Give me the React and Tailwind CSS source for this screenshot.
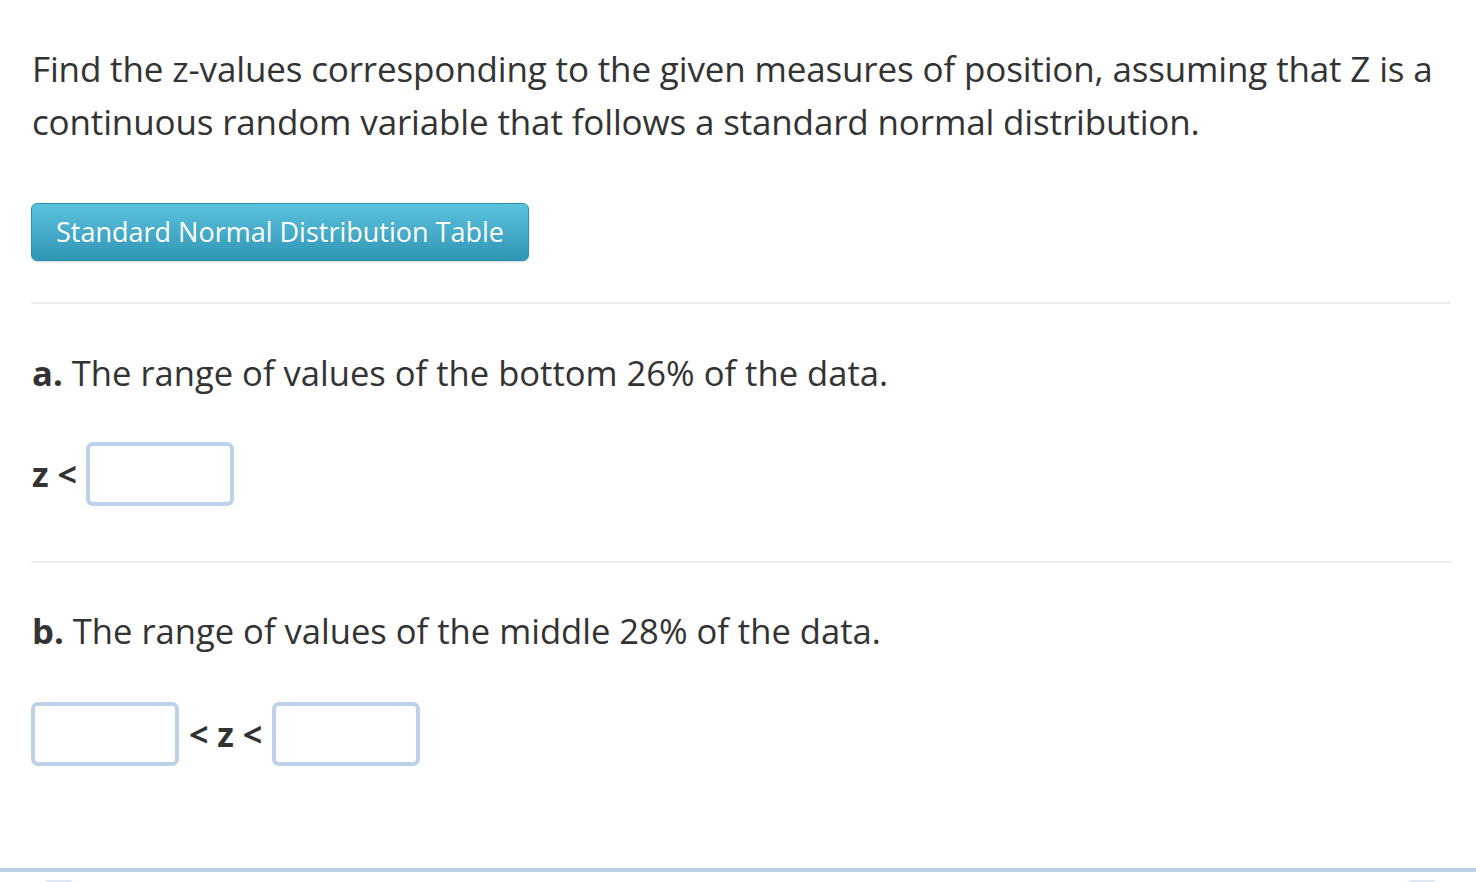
import React from 'react';

const font = { fontFamily: '"Open Sans", "Noto Sans", sans-serif' };

const Box = () => (
  <div className="w-[148px] h-[64px] rounded-[7px] border-[4px] border-[#bdd1ea] bg-white" />
);

const Divider = () => <div className="h-[2px] bg-[#eeeeee] mr-[25px] ml-[31px]" />;

export default function App() {
  return (
    <div className="bg-white text-[#333333] min-h-[882px] overflow-hidden" style={font}>
      <div className="px-[32px] pt-[42px]">
        <p className="text-[35px] leading-[53px] tracking-[-0.15px]">
          Find the z-values corresponding to the given measures of position, assuming that Z is a
          continuous random variable that follows a standard normal distribution.
        </p>
        <button className="mt-[55px] -ml-[1px] h-[58px] w-[498px] rounded-[6px] border border-[#2a8fae] bg-gradient-to-b from-[#5bc2de] to-[#2f96b4] text-white text-[27px] shadow-[0_1px_1px_rgba(0,0,0,0.15)]">
          Standard Normal Distribution Table
        </button>
      </div>

      <div className="mt-[41px]">
        <Divider />
      </div>

      <div className="px-[32px]">
        <h3 className="mt-[42px] text-[34.6px] leading-[53px]">
          <span className="font-bold">a.</span> The range of values of the bottom 26% of the data.
        </h3>
        <div className="mt-[43px] flex items-center">
          <span className="font-bold text-[34px] mr-[9px]">z &lt;</span>
          <Box />
        </div>
      </div>

      <div className="mt-[55px]">
        <Divider />
      </div>

      <div className="px-[32px]">
        <h3 className="mt-[41px] text-[34.6px] leading-[53px]">
          <span className="font-bold">b.</span> The range of values of the middle 28% of the data.
        </h3>
        <div className="mt-[45px] -ml-[1px] flex items-center">
          <Box />
          <span className="font-bold text-[34px] mx-[10px]">&lt; z &lt;</span>
          <Box />
        </div>
      </div>

      <div className="mt-[102px] h-[4px] bg-[#bccfe8]" />
      <div className="flex justify-between px-[45px] pt-[8px]">
        <div className="w-[28px] h-[8px] rounded-full bg-[#dde7f3]" />
        <div className="w-[28px] h-[8px] rounded-full bg-[#dde7f3] mr-[-5px]" />
      </div>
    </div>
  );
}
